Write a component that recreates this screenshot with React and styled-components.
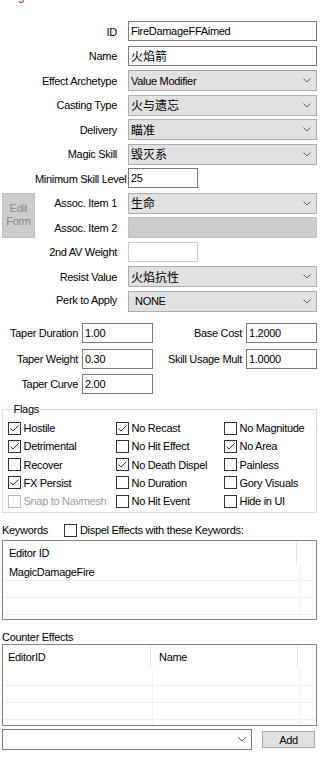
import React from 'react';
import styled, { createGlobalStyle } from 'styled-components';

const Global = createGlobalStyle`
  html, body { margin: 0; padding: 0; background: #ffffff; }
  body {
    font-family: "Liberation Sans", "Noto Sans CJK SC", sans-serif;
    font-size: 11px;
    letter-spacing: -0.3px;
    color: #000000;
  }
  * { box-sizing: border-box; }
`;

const Page = styled.div`
  width: 324px;
  height: 760px;
  overflow: hidden;
  display: flex;
  flex-direction: column;
`;

const TopClip = styled.div`
  height: 3px;
  overflow: hidden;
  padding-left: 18px;
  color: #d0202a;
  span { display: block; margin-top: -10px; font-size: 12px; line-height: 13px; }
`;

const FormGrid = styled.div`
  margin: 18px 0 0 2px;
  display: grid;
  grid-template-columns: 33px 93px 189px;
  grid-auto-rows: 21px;
  row-gap: 3.5px;
`;

const Label = styled.div`
  grid-column: 2;
  text-align: right;
  padding-right: 11px;
  align-self: center;
  white-space: nowrap;
  margin-top: ${p => (p.$nudge ? p.$nudge : 0)}px;
`;

const TextBox = styled.div`
  grid-column: 3;
  width: ${p => p.$w || 189}px;
  height: 20px;
  border: 1px solid ${p => (p.$disabled ? '#cccccc' : '#7a7a7a')};
  background: #ffffff;
  padding-left: 2px;
  display: flex;
  align-items: center;
  white-space: nowrap;
`;

const ComboBox = styled.div`
  grid-column: 3;
  height: 21px;
  border: 1px solid ${p => (p.$disabled ? '#bfbfbf' : '#adadad')};
  background: ${p => (p.$disabled ? '#cccccc' : '#e1e1e1')};
  padding: 0 5px 0 ${p => p.$indent || 2}px;
  display: flex;
  align-items: center;
  justify-content: space-between;
  white-space: nowrap;
`;

const Cjk = styled.span`
  font-size: 12px;
  font-family: "Noto Sans CJK SC", sans-serif;
  letter-spacing: 0;
  line-height: 14px;
`;

const EditButton = styled.div`
  grid-column: 1;
  grid-row: span 2;
  border: 1px solid #bfbfbf;
  background: #cccccc;
  color: #8a8a8a;
  display: flex;
  align-items: center;
  justify-content: center;
  text-align: center;
  line-height: 13px;
`;

const TaperGrid = styled.div`
  margin-top: 11.5px;
  display: grid;
  grid-template-columns: 82px 71px 93px 71px;
  grid-auto-rows: 20px;
  row-gap: 5.5px;
`;

const TaperLabel = styled.div`
  text-align: right;
  padding-right: ${p => p.$pad || 4}px;
  align-self: center;
  white-space: nowrap;
`;

const TaperBox = styled.div`
  height: 20px;
  border: 1px solid #7a7a7a;
  background: #ffffff;
  padding-left: 2px;
  display: flex;
  align-items: center;
`;

const Group = styled.fieldset`
  margin: 9px 0 0 2px;
  width: 315px;
  padding: 3px 0 2px 4.5px;
  border: 1px solid #dcdcdc;
  min-inline-size: 0;
`;

const Legend = styled.legend`
  padding: 0 1px;
  margin-left: 5px;
  line-height: 13px;
`;

const FlagGrid = styled.div`
  display: grid;
  grid-template-columns: 108px 108px 1fr;
  grid-auto-rows: 18.25px;
`;

const CheckRow = styled.label`
  display: flex;
  align-items: center;
  gap: 3px;
  white-space: nowrap;
  color: ${p => (p.$disabled ? '#a0a0a0' : '#000000')};
`;

const Box = styled.span`
  width: 13px;
  height: 13px;
  border: 1px solid ${p => (p.$disabled ? '#bcbcbc' : '#333333')};
  background: #ffffff;
  display: inline-flex;
  flex-shrink: 0;
`;

const KeywordRow = styled.div`
  margin: 10px 0 0 2px;
  height: 14px;
  display: flex;
  align-items: center;
`;

const KeywordCheck = styled(CheckRow)`
  margin-left: 16px;
`;

const SectionLabel = styled.div`
  margin: ${p => p.$top || 0}px 0 0 2px;
  height: 13px;
  line-height: 13px;
`;

const ListBox = styled.div`
  margin: ${p => p.$top || 0}px 0 0 2px;
  width: 315px;
  height: ${p => p.$h}px;
  border: 1px solid #828790;
  background: #ffffff;
  overflow: hidden;
`;

const ListRow = styled.div`
  display: grid;
  grid-template-columns: ${p => p.$cols};
  height: ${p => p.$h || 17}px;
  border-bottom: ${p => (p.$head ? 'none' : '1px solid #f0f0f0')};
`;

const Cell = styled.div`
  padding-left: ${p => p.$pad || 6}px;
  border-right: 1px solid ${p => (p.$head ? '#e5e5e5' : '#f0f0f0')};
  display: flex;
  align-items: center;
  white-space: nowrap;
  &:last-child { border-right: none; }
`;

const BottomRow = styled.div`
  margin: 3px 0 0 2px;
  display: flex;
  align-items: center;
  gap: 10px;
`;

const EditCombo = styled.div`
  width: 250px;
  height: 21px;
  border: 1px solid #7a7a7a;
  background: #ffffff;
  display: flex;
  align-items: center;
  justify-content: flex-end;
  padding-right: 5px;
`;

const AddButton = styled.div`
  width: 53px;
  height: 17px;
  border: 1px solid #adadad;
  background: #e1e1e1;
  display: flex;
  align-items: center;
  justify-content: center;
`;

function Chevron({ disabled }) {
  return (
    <svg width="8" height="5" viewBox="0 0 8 5">
      <polyline points="0.5,0.5 4,4 7.5,0.5" fill="none" stroke={disabled ? '#bfbfbf' : '#606060'} strokeWidth="1" />
    </svg>
  );
}

function Check({ checked, disabled, children }) {
  return (
    <CheckRow $disabled={disabled}>
      <Box $disabled={disabled}>
        {checked && (
          <svg width="11" height="11" viewBox="0 0 11 11">
            <polyline points="1.5,5.5 4,8 9.5,2.5" fill="none" stroke="#333333" strokeWidth="1" />
          </svg>
        )}
      </Box>
      {children}
    </CheckRow>
  );
}

function Combo({ children, disabled, indent }) {
  return (
    <ComboBox $disabled={disabled} $indent={indent}>
      <span>{children}</span>
      <Chevron disabled={disabled} />
    </ComboBox>
  );
}

const flags = [
  ['Hostile', true], ['No Recast', true], ['No Magnitude', false],
  ['Detrimental', true], ['No Hit Effect', false], ['No Area', true],
  ['Recover', false], ['No Death Dispel', true], ['Painless', false],
  ['FX Persist', true], ['No Duration', false], ['Gory Visuals', false],
  ['Snap to Navmesh', false, true], ['No Hit Event', false], ['Hide in UI', false],
];

export default function App() {
  return (
    <Page>
      <Global />
      <TopClip><span>g</span></TopClip>

      <FormGrid>
        <Label>ID</Label>
        <TextBox>FireDamageFFAimed</TextBox>

        <Label>Name</Label>
        <TextBox><Cjk>火焰箭</Cjk></TextBox>

        <Label>Effect Archetype</Label>
        <Combo>Value Modifier</Combo>

        <Label>Casting Type</Label>
        <Combo><Cjk>火与遗忘</Cjk></Combo>

        <Label>Delivery</Label>
        <Combo><Cjk>瞄准</Cjk></Combo>

        <Label>Magic Skill</Label>
        <Combo><Cjk>毁灭系</Cjk></Combo>

        <Label>Minimum Skill Level</Label>
        <TextBox $w={70}>25</TextBox>

        <EditButton>Edit<br />Form</EditButton>
        <Label>Assoc. Item 1</Label>
        <Combo><Cjk>生命</Cjk></Combo>

        <Label>Assoc. Item 2</Label>
        <Combo disabled />

        <Label>2nd AV Weight</Label>
        <TextBox $w={70} $disabled />

        <Label>Resist Value</Label>
        <Combo><Cjk>火焰抗性</Cjk></Combo>

        <Label $nudge={-2}>Perk to Apply</Label>
        <Combo indent={6}>NONE</Combo>
      </FormGrid>

      <TaperGrid>
        <TaperLabel>Taper Duration</TaperLabel>
        <TaperBox>1.00</TaperBox>
        <TaperLabel>Base Cost</TaperLabel>
        <TaperBox>1.2000</TaperBox>

        <TaperLabel>Taper Weight</TaperLabel>
        <TaperBox>0.30</TaperBox>
        <TaperLabel>Skill Usage Mult</TaperLabel>
        <TaperBox>1.0000</TaperBox>

        <TaperLabel>Taper Curve</TaperLabel>
        <TaperBox>2.00</TaperBox>
      </TaperGrid>

      <Group>
        <Legend>Flags</Legend>
        <FlagGrid>
          {flags.map(([name, on, off]) => (
            <Check key={name} checked={on} disabled={off}>{name}</Check>
          ))}
        </FlagGrid>
      </Group>

      <KeywordRow>
        <span>Keywords</span>
        <KeywordCheck as="div">
          <Box />
          Dispel Effects with these Keywords:
        </KeywordCheck>
      </KeywordRow>

      <ListBox $top={3} $h={80}>
        <ListRow $head $h={23} $cols="294px 1fr">
          <Cell $head>Editor ID</Cell>
          <Cell $head />
        </ListRow>
        <ListRow $cols="298px 1fr">
          <Cell>MagicDamageFire</Cell>
          <Cell />
        </ListRow>
        <ListRow $cols="298px 1fr"><Cell /><Cell /></ListRow>
        <ListRow $cols="298px 1fr"><Cell /><Cell /></ListRow>
        <ListRow $cols="298px 1fr"><Cell /><Cell /></ListRow>
      </ListBox>

      <SectionLabel $top={11}>Counter Effects</SectionLabel>

      <ListBox $h={82}>
        <ListRow $head $h={24} $cols="148px 147px 1fr">
          <Cell $head $pad={5}>EditorID</Cell>
          <Cell $head $pad={8}>Name</Cell>
          <Cell $head />
        </ListRow>
        {[0, 1, 2, 3].map(i => (
          <ListRow key={i} $cols="150px 147px 1fr"><Cell /><Cell /><Cell /></ListRow>
        ))}
      </ListBox>

      <BottomRow>
        <EditCombo><Chevron /></EditCombo>
        <AddButton>Add</AddButton>
      </BottomRow>
    </Page>
  );
}
